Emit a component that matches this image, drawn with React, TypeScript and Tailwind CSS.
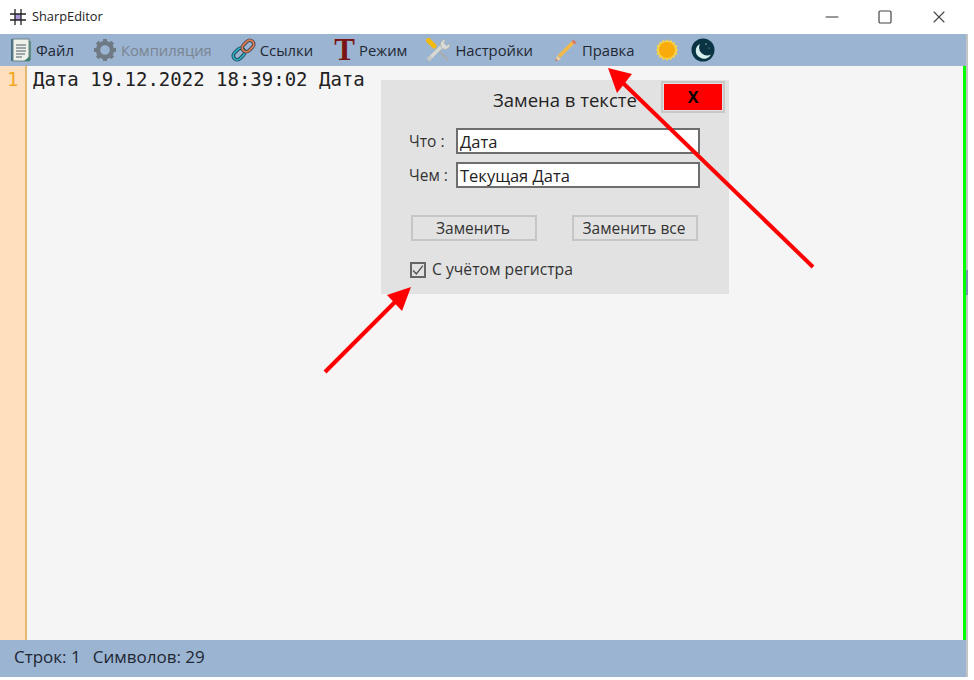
import type { ReactNode } from 'react';
import { Minus, Square, X } from 'lucide-react';

function FileIcon() {
  return (
    <svg width="22" height="24" viewBox="0 0 22 24">
      <rect x="1" y="1" width="4" height="22" fill="#3f6f80" />
      <rect x="17" y="3" width="4" height="19" fill="#5f8f80" />
      <rect x="3" y="1" width="16" height="22" fill="#eef1ea" stroke="#6f8288" />
      <path d="M6 7h10M6 10h10M6 13h10M6 16h9M6 19h6" stroke="#838e94" strokeWidth="1.4" />
      <path d="M14 23l6-5v5z" fill="#3f7f6f" />
    </svg>
  );
}

function GearIcon() {
  return (
    <svg width="24" height="24" viewBox="0 0 24 24">
      <circle cx="12" cy="12" r="7" fill="none" stroke="#707a84" strokeWidth="4.4" />
      <path
        d="M12 1v4M12 19v4M1 12h4M19 12h4M4.2 4.2l3 3M16.800 16.800l3 3M19.800 4.200l-3 3M7.200 16.800l-3 3"
        stroke="#707a84"
        strokeWidth="4"
      />
    </svg>
  );
}

function LinkIcon() {
  return (
    <svg width="25" height="24" viewBox="0 0 25 24" fill="none">
      <rect x="1.500" y="12" width="13" height="8" rx="4" transform="rotate(-45 8 16)" stroke="#24404f" strokeWidth="3.600" />
      <rect x="1.500" y="12" width="13" height="8" rx="4" transform="rotate(-45 8 16)" stroke="#27b0c8" strokeWidth="1.800" />
      <rect x="10.500" y="4" width="13" height="8" rx="4" transform="rotate(-45 17 8)" stroke="#3f4a50" strokeWidth="3.600" />
      <rect x="10.500" y="4" width="13" height="8" rx="4" transform="rotate(-45 17 8)" stroke="#e07a50" strokeWidth="1.800" />
    </svg>
  );
}

function ToolsIcon() {
  return (
    <svg width="25" height="24" viewBox="0 0 25 24" fill="none">
      <path d="M8 8l14 14" stroke="#a8adb0" strokeWidth="2.400" />
      <path d="M2.500 2.500l5.500 5.500" stroke="#f2b90f" strokeWidth="5" strokeLinecap="round" />
      <path d="M3.500 20.500L17 7" stroke="#d6d8d2" strokeWidth="3.600" />
      <path d="M15 9a5 5 0 0 1 5-7.500l-2 3.500 2.500 2.500 3.500-2a5 5 0 0 1-7 5.500z" fill="#d8dad4" stroke="#a0a5a6" strokeWidth="0.600" />
      <circle cx="3.500" cy="20.500" r="2.400" fill="#c4c7c2" />
    </svg>
  );
}

function PencilIcon() {
  return (
    <svg width="24" height="24" viewBox="0 0 24 24" fill="none">
      <path d="M5 18.500L19.500 4" stroke="#f3b948" strokeWidth="3.600" />
      <path d="M18.500 2.500l3 3" stroke="#d9786a" strokeWidth="2.600" />
      <path d="M1.500 23l1.500-5.500 4 4z" fill="#eed09a" />
      <path d="M1.500 23l.6-2.200 1.600 1.600z" fill="#c9564a" />
    </svg>
  );
}

function SunIcon() {
  return (
    <svg width="22" height="22" viewBox="0 0 22 22">
      <path
        d="M11 0l1.800 2.300L15.200 .8l.9 2.700 2.800-.5-.1 2.900 2.800.4-1.100 2.600L22 11l-1.500 2.100 1.100 2.600-2.800.4.100 2.900-2.800-.5-.9 2.700-2.400-1.500L11 22l-1.800-2.300-2.400 1.500-.9-2.700-2.800.5.1-2.900-2.800-.4 1.100-2.600L0 11l1.500-2.100L.4 6.300l2.800-.4-.1-2.900 2.800.5.9-2.700 2.400 1.500z"
        fill="#f6d24a"
      />
      <circle cx="11" cy="11" r="8" fill="#f9ab0c" />
    </svg>
  );
}

function MoonIcon() {
  return (
    <svg width="24" height="24" viewBox="0 0 24 24">
      <circle cx="12" cy="12" r="11.500" fill="#0a3444" />
      <path d="M9 6a8 8 0 0 0 11 10.500A7.500 7.500 0 0 1 9 19.500 7.500 7.500 0 0 1 9 6z" fill="#d7f0ee" />
      <circle cx="15" cy="6" r="0.800" fill="#8fb8c0" />
      <circle cx="18" cy="10" r="0.600" fill="#8fb8c0" />
    </svg>
  );
}

function HashIcon() {
  return (
    <svg width="16" height="16" viewBox="0 0 16 16">
      <rect x="5" y="5" width="6" height="6" fill="#a996d8" />
      <path d="M5 0v16M11 0v16M0 5h16M0 11h16" stroke="#222222" strokeWidth="1.300" />
    </svg>
  );
}

function ToolItem({ icon, label, muted, className }: { icon: ReactNode; label: string; muted?: boolean; className: string }) {
  return (
    <div className={`flex items-center shrink-0 ${className}`}>
      {icon}
      <span className={`ml-[4px] text-[14.800px] ${muted ? 'text-[#7b8490]' : 'text-[#1f2733]'}`}>{label}</span>
    </div>
  );
}

function DialogField({ label, value }: { label: string; value: string }) {
  return (
    <div className="flex items-center h-[26px]">
      <span className="w-[47px] pt-[2px] text-[15.500px] text-[#333333] whitespace-pre">{label}</span>
      <div className="w-[244px] h-[26px] bg-white border-2 border-[#6e6e6e] pl-[2px] text-[16.500px] leading-[24px] text-[#222222]">
        {value}
      </div>
    </div>
  );
}

function DialogButton({ label }: { label: string }) {
  return (
    <button className="w-[126px] h-[26px] border-2 border-[#c6c6c6] pr-[2px] text-[15.500px] leading-[22px] text-[#333333]">
      {label}
    </button>
  );
}

export default function App() {
  return (
    <div
      className="relative w-[974px] h-[680px] bg-white overflow-hidden"
      style={{ fontFamily: '"Open Sans", "Noto Sans", sans-serif' }}
    >
      <div className="w-[966px] h-[677px] flex flex-col">
        {/* Title bar */}
        <div className="h-[34px] shrink-0 flex items-center bg-white">
          <div className="ml-[10px]">
            <HashIcon />
          </div>
          <span className="ml-[6px] text-[12.800px] text-[#222222]">SharpEditor</span>
          <div className="ml-auto flex items-center text-[#444444]">
            <Minus size={20} strokeWidth={1.800} className="mr-[35px] text-[#777777]" />
            <Square size={16} strokeWidth={1.800} className="mr-[36px]" />
            <X size={20} strokeWidth={1.300} className="mr-[17px]" />
          </div>
        </div>

        {/* Toolbar */}
        <div className="h-[32px] shrink-0 flex items-center bg-[#9ab4d2]">
          <ToolItem className="ml-[10px]" icon={<FileIcon />} label="Файл" />
          <ToolItem className="ml-[19px]" icon={<GearIcon />} label="Компиляция" muted />
          <ToolItem className="ml-[19px]" icon={<LinkIcon />} label="Ссылки" />
          <ToolItem
            className="ml-[21px]"
            icon={
              <span
                className="w-[21px] text-center text-[31px] leading-[28px] font-bold text-[#7a1414]"
                style={{ fontFamily: '"Liberation Serif", serif' }}
              >
                T
              </span>
            }
            label="Режим"
          />
          <ToolItem className="ml-[19px]" icon={<ToolsIcon />} label="Настройки" />
          <ToolItem className="ml-[21px]" icon={<PencilIcon />} label="Правка" />
          <div className="ml-[22px]">
            <SunIcon />
          </div>
          <div className="ml-[13px]">
            <MoonIcon />
          </div>
        </div>

        {/* Editor */}
        <div className="flex-1 flex min-h-0 bg-[#f5f5f5] border-r-[3px] border-[#00ff00]">
          <div className="w-[27px] shrink-0 bg-[#ffdfbd] border-r-2 border-[#e3b970] pl-[7px] pt-[1px] text-[19px] leading-[25px] text-[#f4a81e]" style={{ fontFamily: '"DejaVu Sans Mono", monospace' }}>
            1
          </div>
          <div className="pl-[6px] pt-[1px] text-[19px] leading-[25px] text-[#222222]" style={{ fontFamily: '"DejaVu Sans Mono", monospace' }}>
            Дата 19.12.2022 18:39:02 Дата
          </div>
        </div>

        {/* Status bar */}
        <div className="h-[37px] shrink-0 flex items-center bg-[#9ab4d2] pl-[14px] pb-[3px] text-[17px] text-[#1f2733]">
          <span>Строк: 1</span>
          <span className="ml-[12px]">Символов: 29</span>
        </div>
      </div>
      <div className="absolute left-[966px] top-[34px] w-[2px] h-[643px] bg-[#c4c4c4]" />
      <div className="absolute left-[966px] top-[270px] w-[2px] h-[25px] bg-[#7f8fb0]" />

      {/* Replace dialog */}
      <div className="absolute left-[381px] top-[80px] w-[348px] h-[214px] bg-[#e2e2e2] pl-[28px]">
        <div className="h-[48px] relative">
          <div className="absolute left-[84px] top-[6px] text-[18.500px] text-[#222222]">Замена в тексте</div>
          <div className="absolute left-[252px] top-[1px] w-[64px] h-[32px] border-2 border-[#c8c8c8] p-[1px]">
            <div className="h-full bg-[#ff0000] flex items-center justify-center text-[16px] font-bold text-black">X</div>
          </div>
        </div>
        <div className="flex flex-col gap-[8px]">
          <DialogField label="Что :" value="Дата" />
          <DialogField label="Чем :" value="Текущая Дата" />
        </div>
        <div className="mt-[27px] ml-[2px] flex gap-[35px]">
          <DialogButton label="Заменить" />
          <DialogButton label="Заменить все" />
        </div>
        <div className="mt-[17px] ml-[1px] flex items-center">
          <div className="w-[16px] h-[16px] border-2 border-[#666666] flex items-center justify-center">
            <svg width="12" height="12" viewBox="0 0 11 11" fill="none">
              <path d="M1 6l3 3 6-7.500" stroke="#555555" strokeWidth="1.300" />
            </svg>
          </div>
          <span className="ml-[6px] text-[15.700px] text-[#333333]">С учётом регистра</span>
        </div>
      </div>

      {/* Annotation arrows */}
      <svg className="absolute left-0 top-0 pointer-events-none" width="974" height="680" viewBox="0 0 974 680">
        <path d="M813 267L622 82" stroke="#ff0000" strokeWidth="4" />
        <path d="M608 68L632 74 617 93z" fill="#ff0000" />
        <path d="M325 372L396 301" stroke="#ff0000" strokeWidth="4" />
        <path d="M411 287L387 295 402 311z" fill="#ff0000" />
      </svg>
    </div>
  );
}
